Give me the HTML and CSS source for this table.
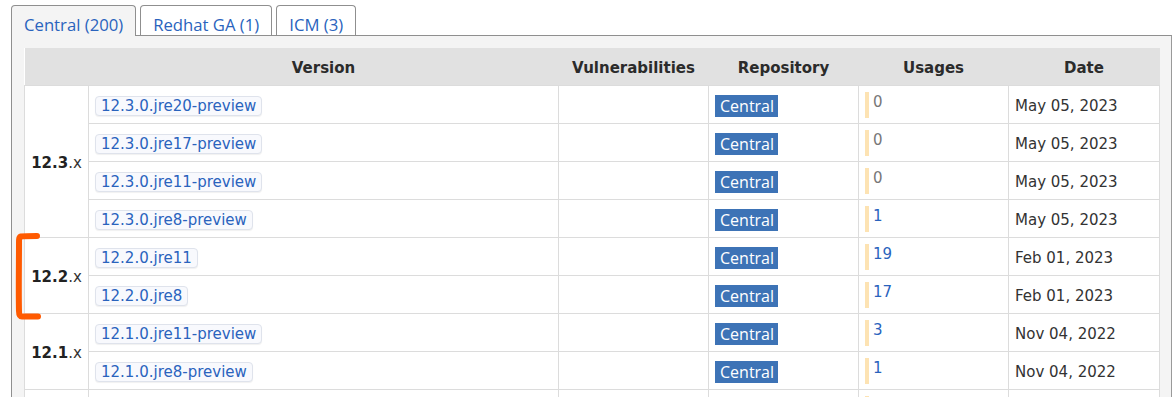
FILE: index.html
```html
<!DOCTYPE html>
<html>
<head>
<meta charset="utf-8">
<link rel="stylesheet" href="styles.css">
</head>
<body>
<div class="page">
  <ul class="tabs">
    <li class="tab active"><a href="#">Central (200)</a></li>
    <li class="tab"><a href="#">Redhat GA (1)</a></li>
    <li class="tab"><a href="#">ICM (3)</a></li>
  </ul>
  <div class="panel">
    <table class="grid">
      <colgroup>
        <col class="c-group"><col class="c-ver"><col class="c-vul"><col class="c-repo"><col class="c-use"><col class="c-date">
      </colgroup>
      <thead>
        <tr><th></th><th>Version</th><th>Vulnerabilities</th><th>Repository</th><th>Usages</th><th>Date</th></tr>
      </thead>
      <tbody>
        <tr>
          <td class="group" rowspan="4"><b>12.3</b>.x</td>
          <td><a class="ver" href="#">12.3.0.jre20-preview</a></td><td></td>
          <td><span class="repo">Central</span></td>
          <td><div class="usage"><span class="zero">0</span></div></td>
          <td class="date">May 05, 2023</td>
        </tr>
        <tr>
          <td><a class="ver" href="#">12.3.0.jre17-preview</a></td><td></td>
          <td><span class="repo">Central</span></td>
          <td><div class="usage"><span class="zero">0</span></div></td>
          <td class="date">May 05, 2023</td>
        </tr>
        <tr>
          <td><a class="ver" href="#">12.3.0.jre11-preview</a></td><td></td>
          <td><span class="repo">Central</span></td>
          <td><div class="usage"><span class="zero">0</span></div></td>
          <td class="date">May 05, 2023</td>
        </tr>
        <tr>
          <td><a class="ver" href="#">12.3.0.jre8-preview</a></td><td></td>
          <td><span class="repo">Central</span></td>
          <td><div class="usage"><a href="#">1</a></div></td>
          <td class="date">May 05, 2023</td>
        </tr>
        <tr>
          <td class="group" rowspan="2"><b>12.2</b>.x</td>
          <td><a class="ver" href="#">12.2.0.jre11</a></td><td></td>
          <td><span class="repo">Central</span></td>
          <td><div class="usage"><a href="#">19</a></div></td>
          <td class="date">Feb 01, 2023</td>
        </tr>
        <tr>
          <td><a class="ver" href="#">12.2.0.jre8</a></td><td></td>
          <td><span class="repo">Central</span></td>
          <td><div class="usage"><a href="#">17</a></div></td>
          <td class="date">Feb 01, 2023</td>
        </tr>
        <tr>
          <td class="group" rowspan="2"><b>12.1</b>.x</td>
          <td><a class="ver" href="#">12.1.0.jre11-preview</a></td><td></td>
          <td><span class="repo">Central</span></td>
          <td><div class="usage"><a href="#">3</a></div></td>
          <td class="date">Nov 04, 2022</td>
        </tr>
        <tr>
          <td><a class="ver" href="#">12.1.0.jre8-preview</a></td><td></td>
          <td><span class="repo">Central</span></td>
          <td><div class="usage"><a href="#">1</a></div></td>
          <td class="date">Nov 04, 2022</td>
        </tr>
        <tr>
          <td class="group" rowspan="2"><b>11.2</b>.x</td>
          <td><a class="ver" href="#">11.2.3.jre18</a></td><td></td>
          <td><span class="repo">Central</span></td>
          <td><div class="usage"><a href="#">6</a></div></td>
          <td class="date">Jan 31, 2023</td>
        </tr>
        <tr>
          <td><a class="ver" href="#">11.2.3.jre17</a></td><td></td>
          <td><span class="repo">Central</span></td>
          <td><div class="usage"><a href="#">9</a></div></td>
          <td class="date">Jan 31, 2023</td>
        </tr>
      </tbody>
    </table>
  </div>
  <svg class="bracket" width="50" height="100" viewBox="0 0 50 100">
    <path d="M37 5 C30 5 24 5 21 5.5 C19 6 19 8 19 12 C19 35 18.5 60 19 80 C19 84 19.5 85.5 22 85.5 L38 85.5" fill="none" stroke="#ff5a00" stroke-width="6" stroke-linecap="round" stroke-linejoin="round"/>
  </svg>
</div>
</body>
</html>
```
FILE: styles.css
```css
html, body {
  margin: 0;
  padding: 0;
  background: #ffffff;
}

.page {
  position: relative;
  padding: 5px 0 0 11px;
  font-family: "DejaVu Sans", Verdana, sans-serif;
  font-size: 15px;
  color: #333333;
}

.tabs {
  list-style: none;
  margin: 0;
  padding: 0;
  display: flex;
  gap: 4px;
  position: relative;
  z-index: 1;
}

.tab {
  height: 30px;
  border: 1px solid #8f8f8f;
  border-bottom: none;
  border-radius: 4px 4px 0 0;
  background: #ffffff;
  display: flex;
  align-items: center;
  box-sizing: border-box;
  padding: 7px 12px 0 12px;
  font-family: "Open Sans", "Noto Sans", sans-serif;
  font-size: 16.7px;
}

.tab.active {
  background: #f4f4f4;
  height: 31px;
  margin-bottom: -1px;
  padding-bottom: 1px;
}

.tab a {
  color: #2a63bd;
  text-decoration: none;
}

.panel {
  border: 1px solid #8f8f8f;
  border-right-color: #9a9a9a;
  background: #f4f4f4;
  padding: 12px;
}

.grid {
  width: 1135px;
  table-layout: fixed;
  border-collapse: collapse;
  background: #ffffff;
}

.c-group { width: 64px; }
.c-ver { width: 470px; }
.c-vul { width: 150px; }
.c-repo { width: 150px; }
.c-use { width: 150px; }
.c-date { width: 151px; }

.grid th {
  background: #e1e1e1;
  height: 35px;
  padding: 2px 0 0 0;
  font-weight: bold;
  font-size: 15px;
  color: #2b2b2b;
  text-align: center;
  border: none;
}

.grid td {
  border: 1px solid #dcdcdc;
  height: 35px;
  padding: 2px 6px 0 6px;
  vertical-align: middle;
  text-align: left;
  white-space: nowrap;
}

.grid td.group {
  text-align: center;
  padding: 2px 0 0 0;
  color: #333333;
}

.group b {
  color: #222222;
}

.ver {
  display: inline-block;
  border: 1px solid #dfe3ec;
  border-radius: 4px;
  background: #f8f9fd;
  box-shadow: 0 1px 1px rgba(0, 0, 0, 0.06);
  padding: 0 5px;
  line-height: 18px;
  color: #2a63bd;
  text-decoration: none;
}

.repo {
  display: inline-block;
  background: #3d73b6;
  color: #ffffff;
  font-family: "Open Sans", "Noto Sans", sans-serif;
  font-size: 16px;
  line-height: 22px;
  padding: 0 4px 0 5px;
}

.usage {
  border-left: 4px solid #fde3b3;
  height: 26px;
  margin-top: -2px;
  padding-left: 4px;
  line-height: 20px;
  box-sizing: border-box;
}

.usage a {
  color: #2a63bd;
  text-decoration: none;
}

.usage .zero {
  color: #777777;
}

.grid td.date {
  color: #333333;
}

.bracket {
  position: absolute;
  left: 0;
  top: 231px;
}
```
